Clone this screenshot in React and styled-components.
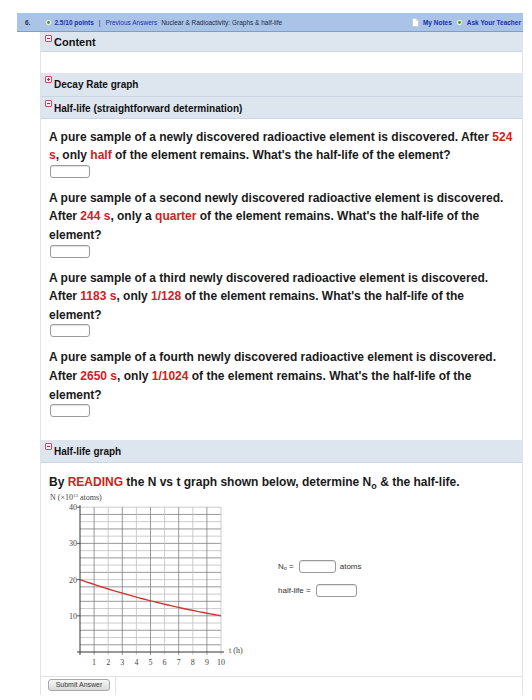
import React from "react";
import { styled, createGlobalStyle } from "styled-components";

const GlobalStyle = createGlobalStyle`
  html, body {
    margin: 0;
    padding: 0;
    background: #ffffff;
    font-family: "Liberation Sans", Arial, sans-serif;
  }
`;

const Page = styled.div`
  padding: 13px 9px 0 17px;
  width: 506px;
`;

const TopBar = styled.div`
  height: 18px;
  background: #a9c4e6;
  border-bottom: 1px solid #7f9dc6;
  display: flex;
  align-items: center;
  padding: 0 2px 0 8px;
  font-size: 6.5px;
  color: #1f2a44;
  white-space: nowrap;
`;

const Number = styled.span`
  font-weight: bold;
  margin-right: 15px;
`;

const BarLink = styled.span`
  color: #1a2fa6;
  font-weight: ${({ $bold }) => ($bold ? "bold" : "normal")};
  margin-left: ${({ $gap }) => $gap || 0}px;
`;

const BarText = styled.span`
  margin-left: ${({ $gap }) => $gap || 0}px;
`;

const BarRight = styled.div`
  margin-left: auto;
  display: flex;
  align-items: center;
  gap: 4px;
`;

const Column = styled.div`
  margin-left: 23px;
  border-left: 1px solid #e2e2e2;
  border-right: 1px solid #e2e2e2;
`;

const SectionHeader = styled.div`
  height: ${({ $h }) => $h || 22}px;
  background: #dde5ef;
  border-bottom: 1px solid #ccd6e2;
  display: flex;
  align-items: flex-start;
  padding-left: 4px;
  box-sizing: border-box;
`;

const Toggle = styled.span`
  width: 5px;
  height: 5px;
  margin-top: 3px;
  border: 1px solid #c2506a;
  border-radius: 1px;
  background: #fbeef1;
  position: relative;
  flex: none;

  &::before {
    content: "";
    position: absolute;
    left: 1px;
    right: 1px;
    top: 2px;
    height: 1px;
    background: #b03050;
  }

  &::after {
    content: "";
    position: absolute;
    top: 1px;
    bottom: 1px;
    left: 2px;
    width: 1px;
    background: #b03050;
    display: ${({ $plus }) => ($plus ? "block" : "none")};
  }
`;

const Title = styled.span`
  margin-left: 2px;
  margin-top: ${({ $big }) => ($big ? 4 : 6)}px;
  font-size: ${({ $big }) => ($big ? 11 : 10)}px;
  line-height: ${({ $big }) => ($big ? 13 : 12)}px;
  font-weight: bold;
  color: #111;
`;

const Spacer = styled.div`
  height: ${({ $h }) => $h}px;
`;

const Questions = styled.div`
  padding: 8.7px 8px 12px 8px;
`;

const Question = styled.div`
  margin-bottom: 11px;
`;

const QText = styled.div`
  font-size: 12px;
  line-height: 18.6px;
  font-weight: bold;
  color: #1a1a1a;
  white-space: nowrap;
`;

const Red = styled.span`
  color: #cc2222;
`;

const AnswerBox = styled.input`
  display: block;
  width: ${({ $w }) => $w || 40}px;
  height: 13px;
  box-sizing: border-box;
  margin: 0 0 0 1px;
  padding: 0;
  border: 1px solid #9a9a9a;
  border-radius: 3px;
  background: #fff;
  box-shadow: inset 0 1px 1px rgba(0, 0, 0, 0.12);
`;

const GraphSection = styled.div`
  padding: 9.5px 0 5px 0;
  border-bottom: 1px solid #e2e2e2;
`;

const Prompt = styled(QText)`
  padding-left: 8px;
  height: 18.6px;

  sub {
    font-size: 9px;
    vertical-align: -3px;
    line-height: 0;
  }
`;

const GraphRow = styled.div`
  display: flex;
  align-items: flex-start;
  padding-left: 5px;
  height: 180px;
`;

const Form = styled.div`
  margin-left: 27px;
  margin-top: 69px;
  display: flex;
  flex-direction: column;
  gap: 11px;
  font-size: 8px;
  color: #333;
`;

const FormRow = styled.div`
  display: flex;
  align-items: center;
  gap: 4px;

  sub {
    font-size: 5.5px;
    vertical-align: -1px;
    line-height: 0;
  }
`;

const SubmitRow = styled.div`
  display: flex;
`;

const SubmitCell = styled.div`
  width: 75px;
  height: 18px;
  border-right: 1px solid #e2e2e2;
  padding: 2px 0 0 7px;
  box-sizing: border-box;
`;

const SubmitButton = styled.button`
  display: block;
  width: 62px;
  height: 12px;
  padding: 0;
  font-family: "Liberation Sans", Arial, sans-serif;
  font-size: 7px;
  line-height: 10px;
  color: #333;
  border: 1px solid #a8a8a8;
  border-radius: 3px;
  background: linear-gradient(#f6f6f6, #d9d9d9);
`;

const StatusDot = () => (
  <svg width="7" height="7" viewBox="0 0 7 7">
    <circle cx="3.5" cy="3.5" r="3.1" fill="#eef5ee" stroke="#9fb3a2" strokeWidth="0.6" />
    <circle cx="3.5" cy="3.5" r="1.4" fill="#2c9a35" />
  </svg>
);

const NoteIcon = () => (
  <svg width="7" height="9" viewBox="0 0 7 9">
    <path d="M0.5 0.5 H4.5 L6.5 2.5 V8.5 H0.5 Z" fill="#ffffff" stroke="#b8c2cc" strokeWidth="0.6" />
    <path d="M4.5 0.5 V2.5 H6.5" fill="none" stroke="#b8c2cc" strokeWidth="0.6" />
  </svg>
);

const X0 = 34;
const Y0 = 161;
const DX = 14.1;
const DY = 3.62;

const Graph = () => {
  const vLines = [];
  for (let t = 1; t <= 10; t++) {
    const x = X0 + t * DX;
    vLines.push(
      <line key={"v" + t} x1={x} y1={Y0 - 40 * DY} x2={x} y2={Y0 + 3}
        stroke={t % 2 ? "#808080" : "#c0c0c0"} strokeWidth="0.8" />
    );
  }
  const hLines = [];
  for (let n = 2; n <= 40; n += 2) {
    const y = Y0 - n * DY;
    hLines.push(
      <line key={"h" + n} x1={X0} y1={y} x2={X0 + 10 * DX} y2={y}
        stroke={(n / 2) % 2 ? "#808080" : "#c0c0c0"} strokeWidth="0.8" />
    );
  }
  const pts = [];
  for (let t = 0; t <= 10; t += 0.25) {
    const n = 20 * Math.pow(0.5, t / 10);
    pts.push(`${(X0 + t * DX).toFixed(2)},${(Y0 - n * DY).toFixed(2)}`);
  }
  const font = { fontFamily: "'Liberation Serif', 'Times New Roman', serif", fontSize: 8, fill: "#444" };

  return (
    <svg width="205" height="180" viewBox="0 0 205 180">
      <text x="4" y="9" style={font}>
        N (×10<tspan fontSize="5" dy="-3">13</tspan><tspan dy="3"> atoms)</tspan>
      </text>
      {hLines}
      {vLines}
      <line x1={X0} y1={Y0 - 40 * DY - 2} x2={X0} y2={Y0 + 3} stroke="#333" strokeWidth="1" />
      <line x1={X0 - 3} y1={Y0} x2={X0 + 10 * DX + 3} y2={Y0} stroke="#333" strokeWidth="1" />
      {[10, 20, 30, 40].map((n) => (
        <g key={"yl" + n}>
          <line x1={X0 - 3} y1={Y0 - n * DY} x2={X0} y2={Y0 - n * DY} stroke="#333" strokeWidth="0.8" />
          <text x={X0 - 3} y={Y0 - n * DY + 3} textAnchor="end" style={font}>{n}</text>
        </g>
      ))}
      {[1, 2, 3, 4, 5, 6, 7, 8, 9, 10].map((t) => (
        <text key={"xl" + t} x={X0 + t * DX} y={Y0 + 13} textAnchor="middle" style={font}>{t}</text>
      ))}
      <text x={X0 + 10 * DX + 8} y={Y0 + 1} style={font}>t (h)</text>
      <polyline points={pts.join(" ")} fill="none" stroke="#cf3434" strokeWidth="1.4" />
    </svg>
  );
};

export default function App() {
  return (
    <>
      <GlobalStyle />
      <Page>
        <TopBar>
          <Number>6.</Number>
          <StatusDot />
          <BarLink $bold $gap={2}>2.5/10 points</BarLink>
          <BarText $gap={5}>|</BarText>
          <BarLink $gap={5}>Previous Answers</BarLink>
          <BarText $gap={4}>Nuclear &amp; Radioactivity: Graphs &amp; half-life</BarText>
          <BarRight>
            <NoteIcon />
            <BarLink $bold>My Notes</BarLink>
            <StatusDot />
            <BarLink $bold>Ask Your Teacher</BarLink>
          </BarRight>
        </TopBar>

        <Column>
          <SectionHeader $h={20}>
            <Toggle />
            <Title $big>Content</Title>
          </SectionHeader>
          <Spacer $h={21} />
          <SectionHeader $h={24}>
            <Toggle $plus />
            <Title>Decay Rate graph</Title>
          </SectionHeader>
          <SectionHeader $h={22}>
            <Toggle />
            <Title>Half-life (straightforward determination)</Title>
          </SectionHeader>

          <Questions>
            <Question>
              <QText>
                A pure sample of a newly discovered radioactive element is discovered. After <Red>524</Red>
                <br />
                <Red>s</Red>, only <Red>half</Red> of the element remains. What's the half-life of the element?
              </QText>
              <AnswerBox type="text" />
            </Question>
            <Question>
              <QText>
                A pure sample of a second newly discovered radioactive element is discovered.
                <br />
                After <Red>244 s</Red>, only a <Red>quarter</Red> of the element remains. What's the half-life of the
                <br />
                element?
              </QText>
              <AnswerBox type="text" />
            </Question>
            <Question>
              <QText>
                A pure sample of a third newly discovered radioactive element is discovered.
                <br />
                After <Red>1183 s</Red>, only <Red>1/128</Red> of the element remains. What's the half-life of the
                <br />
                element?
              </QText>
              <AnswerBox type="text" />
            </Question>
            <Question>
              <QText>
                A pure sample of a fourth newly discovered radioactive element is discovered.
                <br />
                After <Red>2650 s</Red>, only <Red>1/1024</Red> of the element remains. What's the half-life of the
                <br />
                element?
              </QText>
              <AnswerBox type="text" />
            </Question>
          </Questions>

          <SectionHeader $h={23}>
            <Toggle />
            <Title>Half-life graph</Title>
          </SectionHeader>

          <GraphSection>
            <Prompt>
              By <Red>READING</Red> the N vs t graph shown below, determine N<sub>o</sub> &amp; the half-life.
            </Prompt>
            <GraphRow>
              <Graph />
              <Form>
                <FormRow>
                  <span>N<sub>o</sub> =</span>
                  <AnswerBox type="text" $w={37} />
                  <span>atoms</span>
                </FormRow>
                <FormRow>
                  <span>half-life =</span>
                  <AnswerBox type="text" $w={41} />
                </FormRow>
              </Form>
            </GraphRow>
          </GraphSection>

          <SubmitRow>
            <SubmitCell>
              <SubmitButton type="button">Submit Answer</SubmitButton>
            </SubmitCell>
          </SubmitRow>
        </Column>
      </Page>
    </>
  );
}
